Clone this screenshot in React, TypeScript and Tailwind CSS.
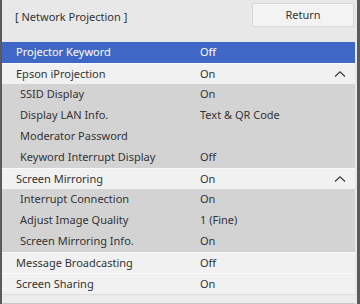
import React from "react";

type Row = { label: string; value: string; kind: "top" | "sub" | "sel"; chevron?: boolean };

const rows: Row[] = [
  { label: "Projector Keyword", value: "Off", kind: "sel" },
  { label: "Epson iProjection", value: "On", kind: "top", chevron: true },
  { label: "SSID Display", value: "On", kind: "sub" },
  { label: "Display LAN Info.", value: "Text & QR Code", kind: "sub" },
  { label: "Moderator Password", value: "", kind: "sub" },
  { label: "Keyword Interrupt Display", value: "Off", kind: "sub" },
  { label: "Screen Mirroring", value: "On", kind: "top", chevron: true },
  { label: "Interrupt Connection", value: "On", kind: "sub" },
  { label: "Adjust Image Quality", value: "1 (Fine)", kind: "sub" },
  { label: "Screen Mirroring Info.", value: "On", kind: "sub" },
  { label: "Message Broadcasting", value: "Off", kind: "top" },
  { label: "Screen Sharing", value: "On", kind: "top" },
];

function Chevron() {
  return (
    <svg width="12" height="8" viewBox="0 0 12 8" fill="none">
      <path d="M1 6.5 L6 1.8 L11 6.5" stroke="#3a3a3a" strokeWidth="1.2" />
    </svg>
  );
}

export default function App() {
  return (
    <div
      className="w-[360px] h-[304px] overflow-hidden bg-[#e8e8e8] border-l-2 border-l-[#5a5a5a] border-r-[3px] border-r-[#5a5a5a] flex flex-col text-[11px] text-[#333]"
      style={{ fontFamily: '"Noto Sans", "Open Sans", sans-serif' }}
    >
      <div className="h-[42px] flex items-start justify-between pl-[13px] pr-[3px]">
        <div className="mt-[8px] leading-[18px]">[ Network Projection ]</div>
        <div className="mt-[3px] w-[102px] h-[24px] bg-[#f3f3f3] border border-[#d8d8d8] flex items-center justify-center">
          Return
        </div>
      </div>
      <div className="flex flex-col mr-[2px]">
        {rows.map((r, i) => {
          const bg =
            r.kind === "sel"
              ? "bg-[#3f67c6] text-white"
              : r.kind === "top"
              ? "bg-[#f1f1f1] border-t border-t-[#fafafa]"
              : "bg-[#d3d3d3]";
          return (
            <div key={i} className={`h-[21px] flex items-center ${bg}`}>
              <div className={`${r.kind === "sub" ? "pl-[18px]" : "pl-[14px]"} w-[198px]`}>{r.label}</div>
              <div className="flex-1">{r.value}</div>
              {r.chevron && (
                <div className="pr-[9px] flex items-center">
                  <Chevron />
                </div>
              )}
            </div>
          );
        })}
        <div className="h-[10px] bg-[#ececec] border-t border-t-[#dcdcdc] border-b border-b-[#c8c8c8]" />
      </div>
    </div>
  );
}
